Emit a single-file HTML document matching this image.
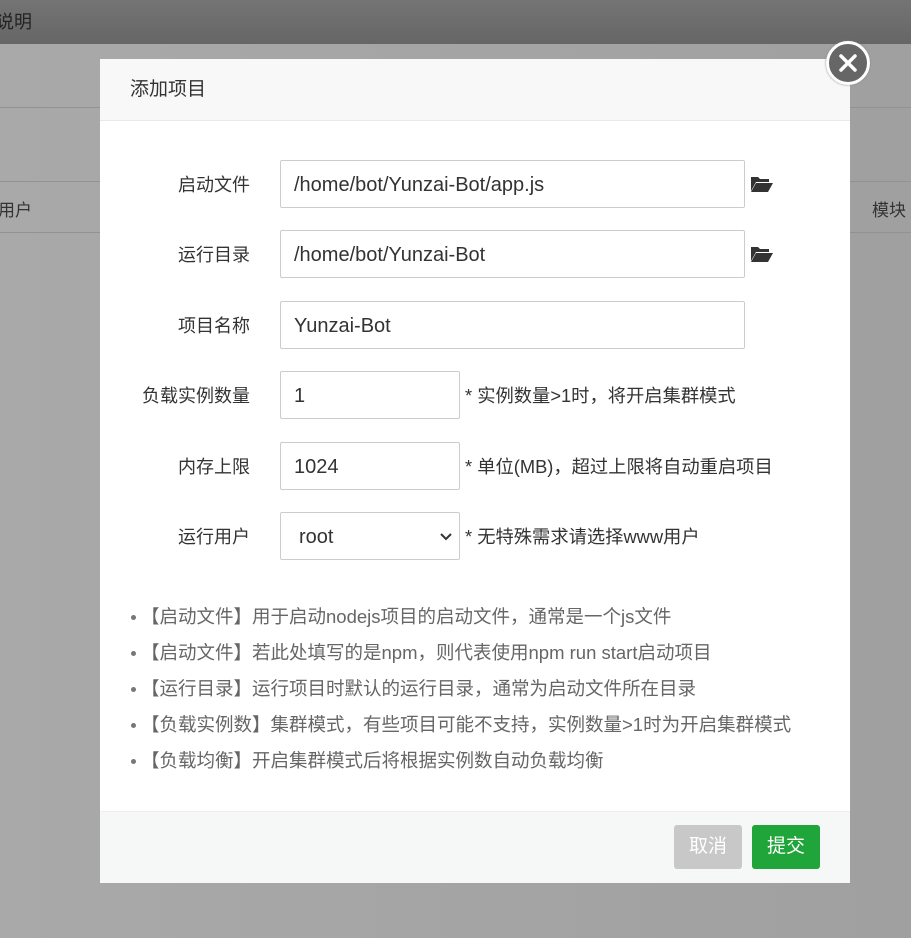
<!DOCTYPE html>
<html><head><meta charset="utf-8"><style>
*{box-sizing:border-box;margin:0;padding:0}
body{width:911px;height:938px;overflow:hidden;background:#a3a3a3;font-family:"Liberation Sans","Noto Sans CJK SC",sans-serif;position:relative;color:#333}
.top{position:absolute;left:-9px;top:0;width:920px;height:44px;background:linear-gradient(#747474,#666);color:#222;font-size:18px;line-height:44px}
.bg{position:absolute;left:0;top:44px;width:911px;height:894px;background:linear-gradient(90deg,#a9a9a9,#a0a0a0)}
.hl{position:absolute;left:0;width:911px;height:1px;background:#929292}
.bgt{position:absolute;font-size:17px;color:#333;top:196px}
.modal{position:absolute;left:100px;top:59px;width:750px;height:824px;background:#fff}
.hd{height:62px;background:#f8f8f8;border-bottom:1px solid #e8e8e8;font-size:19px;line-height:62px;padding-left:30px;color:#333}
.row{position:absolute;left:0;height:48px;width:750px}
.lab{position:absolute;right:600px;top:1px;line-height:48px;font-size:18px;color:#333;white-space:nowrap}
.inp{position:absolute;left:180px;top:0;height:48px;border:1px solid #ccc;border-radius:2px;font-size:20px;line-height:48px;padding-left:13px;color:#333}
.note{position:absolute;left:365px;top:1px;line-height:48px;font-size:18.3px;color:#333;white-space:nowrap}
.fold{position:absolute;left:650px;top:15px}
ul{position:absolute;left:41px;top:544px;list-style:none}
li{font-size:18.5px;color:#666;height:36px;line-height:28px;position:relative;white-space:nowrap}
li:before{content:"";position:absolute;left:-10px;top:12px;width:5px;height:5px;border-radius:50%;background:#777}
.ft{position:absolute;left:0;top:752px;width:750px;height:72px;background:#f6f8f8;border-top:1px solid #eee}
.btn{position:absolute;top:13px;height:44px;width:68px;border-radius:3px;color:#fff;font-size:19px;line-height:44px;text-align:center}
.close{position:absolute;left:826px;top:41px;width:44px;height:44px;border-radius:50%;background:#666;border:3px solid #fff;box-shadow:0 0 2px #888}
</style></head><body>
<div class="top">&nbsp;说明</div>
<div class="bg"></div>
<div class="hl" style="top:107px"></div>
<div class="hl" style="top:181px"></div>
<div class="hl" style="top:232px"></div>
<div class="bgt" style="left:-2px">用户</div>
<div class="bgt" style="left:872px">模块</div>
<div class="modal">
<div class="hd">添加项目</div>
<div class="row" style="top:101px"><span class="lab">启动文件</span><div class="inp" style="width:465px">/home/bot/Yunzai-Bot/app.js</div>
<svg class="fold" width="24" height="18" viewBox="0 0 24 18"><path d="M1 2h7l2 2h9v3H6L1 16z" fill="#333"/><path d="M6 8h17l-5 9H1z" fill="#333"/></svg></div>
<div class="row" style="top:171px"><span class="lab">运行目录</span><div class="inp" style="width:465px">/home/bot/Yunzai-Bot</div>
<svg class="fold" width="24" height="18" viewBox="0 0 24 18"><path d="M1 2h7l2 2h9v3H6L1 16z" fill="#333"/><path d="M6 8h17l-5 9H1z" fill="#333"/></svg></div>
<div class="row" style="top:242px"><span class="lab">项目名称</span><div class="inp" style="width:465px">Yunzai-Bot</div></div>
<div class="row" style="top:312px"><span class="lab">负载实例数量</span><div class="inp" style="width:180px">1</div><span class="note">* 实例数量&gt;1时，将开启集群模式</span></div>
<div class="row" style="top:383px"><span class="lab">内存上限</span><div class="inp" style="width:180px">1024</div><span class="note">* 单位(MB)，超过上限将自动重启项目</span></div>
<div class="row" style="top:453px"><span class="lab">运行用户</span><div class="inp" style="width:180px;padding-left:18px">root
<svg style="position:absolute;right:6px;top:19px" width="14" height="10" viewBox="0 0 14 10"><path d="M2 2l5 5 5-5" stroke="#333" stroke-width="2" fill="none"/></svg></div><span class="note">* 无特殊需求请选择www用户</span></div>
<ul>
<li>【启动文件】用于启动nodejs项目的启动文件，通常是一个js文件</li>
<li>【启动文件】若此处填写的是npm，则代表使用npm run start启动项目</li>
<li>【运行目录】运行项目时默认的运行目录，通常为启动文件所在目录</li>
<li>【负载实例数】集群模式，有些项目可能不支持，实例数量&gt;1时为开启集群模式</li>
<li>【负载均衡】开启集群模式后将根据实例数自动负载均衡</li>
</ul>
<div class="ft">
<div class="btn" style="left:574px;background:#c8c8c8">取消</div>
<div class="btn" style="left:652px;background:#20a53a">提交</div>
</div>
</div>
<div class="close"><svg width="38" height="38" viewBox="0 0 38 38"><path d="M12 12l14 14M26 12L12 26" stroke="#fff" stroke-width="3.5" stroke-linecap="round"/></svg></div>
</body></html>
